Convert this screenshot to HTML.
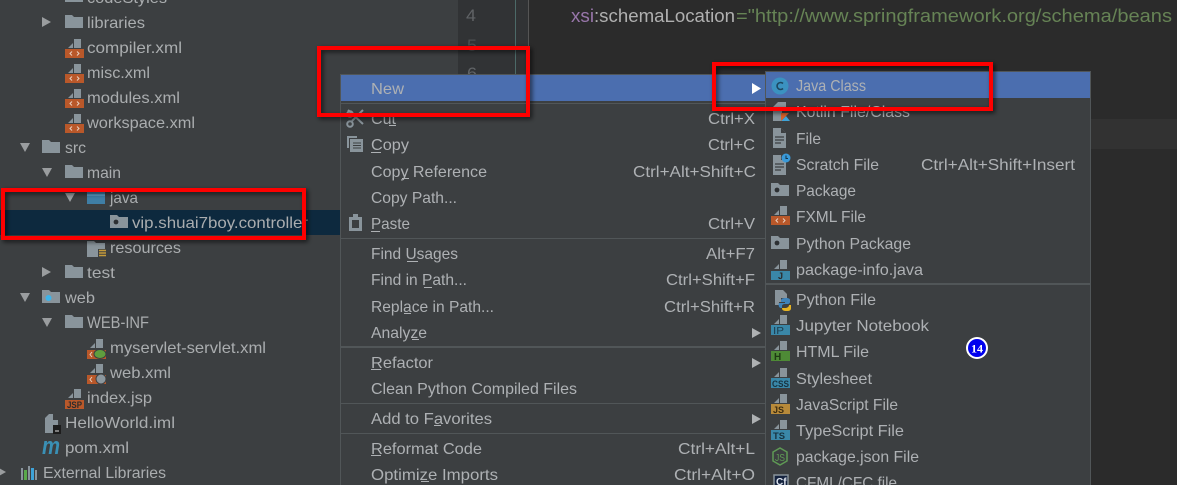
<!DOCTYPE html>
<html><head><meta charset="utf-8"><style>
html,body{margin:0;padding:0;background:#3c3f41;width:1177px;height:485px;overflow:hidden}
svg{display:block}
text{font-family:"Liberation Sans",sans-serif;font-size:16px;fill:#aaadaf}
.m text{fill:#aeb1b4}
</style></head><body>
<svg width="1177" height="485" viewBox="0 0 1177 485" xmlns="http://www.w3.org/2000/svg">
<defs>
<filter id="sh" x="-10%" y="-20%" width="120%" height="140%"><feDropShadow dx="2" dy="2" stdDeviation="2.5" flood-color="#000" flood-opacity=".65"/></filter>
<g id="fo"><path d="M0-8h7l2 2h9V5H0z" fill="#89949b"/></g>
<g id="pk"><path d="M0-8h7l2 2h9V5H0z" fill="#89949b"/><circle cx="6" cy="-1" r="2.4" fill="#2d3033"/></g>
<g id="dc"><path d="M9-8h7V1H9zM3 1l5-5v5z" fill="#89949b"/></g>
<g id="xm"><use href="#dc"/><rect y="2" width="19" height="9" fill="#b9582a"/><path d="M7 4.500 5 6.500l2 2M12 4.500l2 2-2 2" fill="none" stroke="#e8d0c0" stroke-width="1"/></g>
<g id="ar"><path d="M0 0h10L5 9z" fill="#9a9d9f"/></g>
<g id="ac"><path d="M0 0l9 5-9 5z" fill="#9a9d9f"/></g>
<g id="tx"><path d="M1-10h8l5 5V10H1z" fill="#89949b"/><path d="M9-10l5 5H9z" fill="#3c3f41"/><path d="M3-1h9M3 2h9M3 5h6" stroke="#3c3f41" stroke-width="1.200"/></g>
</defs>

<rect width="1177" height="485" fill="#3c3f41"/>
<!-- editor -->
<rect x="458" width="719" height="485" fill="#2b2b2b"/>
<rect x="458" width="70" height="485" fill="#313335"/>
<rect x="515" width="1" height="485" fill="#4c6a68"/>
<rect x="528" width="1" height="485" fill="#555"/>
<rect x="529" y="119" width="648" height="30" fill="#323232"/>
<text x="466" y="21" textLength="10" lengthAdjust="spacingAndGlyphs" style="font-size:17px;fill:#606366">4</text>
<text x="467" y="51" textLength="10" lengthAdjust="spacingAndGlyphs" style="font-size:17px;fill:#4d5052">5</text>
<text x="467" y="79" textLength="10" lengthAdjust="spacingAndGlyphs" style="font-size:17px;fill:#606366">6</text>
<text x="571" y="22" textLength="23" lengthAdjust="spacingAndGlyphs" style="font-size:18px;fill:#9876aa">xsi</text>
<text x="594" y="22" textLength="141" lengthAdjust="spacingAndGlyphs" style="font-size:18px;fill:#b0b0b0">:schemaLocation</text>
<text x="736" y="22" textLength="436" lengthAdjust="spacingAndGlyphs" style="font-size:18px;fill:#668355">="http://www.springframework.org/schema/beans</text>

<!-- tree -->
<rect y="210" width="341" height="25" fill="#0d293e"/>
<use href="#ac" x="42" y="17"/><use href="#ac" x="42" y="267"/><use href="#ac" x="-3" y="467"/>
<use href="#ar" x="20" y="143"/><use href="#ar" x="42" y="168"/><use href="#ar" x="65" y="193"/><use href="#ar" x="20" y="293"/><use href="#ar" x="42" y="318"/>
<use href="#fo" x="65" y="-3"/><use href="#fo" x="65" y="23"/>
<use href="#xm" x="65" y="47"/><use href="#xm" x="65" y="72"/><use href="#xm" x="65" y="97"/><use href="#xm" x="65" y="122"/>
<use href="#fo" x="42" y="148"/><use href="#fo" x="65" y="173"/>
<path d="M87 190h7l2 2h9v12H87z" fill="#3f7ea5"/><path d="M87 194h18v2H87z" fill="#5b9cc4"/>
<use href="#pk" x="110" y="223"/>
<path d="M87 241h7l2 2h9v14H87z" fill="#89949b"/><rect x="98" y="249" width="8" height="9" fill="#3c3f41"/><path d="M99 250.500h7M99 253h7M99 255.500h7" stroke="#c39a3a" stroke-width="1.400"/>
<use href="#fo" x="65" y="273"/>
<use href="#fo" x="42" y="298"/><circle cx="48.500" cy="298" r="3" fill="#3db4ea"/>
<use href="#fo" x="65" y="323"/>
<use href="#dc" x="87" y="347"/><rect x="87" y="350" width="19" height="9" fill="#b9582a"/><path d="M92 352l-2 2.500 2 2.500" fill="none" stroke="#e8d0c0"/><ellipse cx="100" cy="354" rx="6" ry="4.500" fill="#5f9e3e" stroke="#3c3f41"/>
<use href="#dc" x="87" y="372"/><rect x="87" y="375" width="19" height="9" fill="#b9582a"/><path d="M92 377l-2 2.500 2 2.500" fill="none" stroke="#e8d0c0"/><circle cx="101" cy="379" r="5" fill="#8c979e" stroke="#3c3f41"/>
<use href="#dc" x="65" y="397"/><rect x="65" y="400" width="19" height="9" fill="#b9582a"/><text x="67" y="408" textLength="15" lengthAdjust="spacingAndGlyphs" style="font-size:9px;font-weight:bold;fill:#2b2b2b">JSP</text>
<path d="M49 414h4v6h5v13H45V418z" fill="#89949b"/><rect x="53" y="425" width="8" height="9" fill="#1d1d1d"/><path d="M55 431h4" stroke="#ddd"/>
<text x="42" y="454" textLength="18" lengthAdjust="spacingAndGlyphs" style="font-size:24px;font-weight:bold;font-style:italic;fill:#3a90b5">m</text>
<path d="M21 468h2v12h-2z" fill="#89949b"/><path d="M24 470h3v10h-3z" fill="#59a84b"/><path d="M28 466h2v14h-2z" fill="#89949b"/><path d="M31 468h3v12h-3z" fill="#3ea3d8"/><path d="M35 470h2v10h-2z" fill="#89949b"/>

<text x="87" y="3" textLength="80" lengthAdjust="spacingAndGlyphs">codeStyles</text>
<text x="87" y="28" textLength="58" lengthAdjust="spacingAndGlyphs">libraries</text>
<text x="87" y="53" textLength="95" lengthAdjust="spacingAndGlyphs">compiler.xml</text>
<text x="87" y="78" textLength="63" lengthAdjust="spacingAndGlyphs">misc.xml</text>
<text x="87" y="103" textLength="93" lengthAdjust="spacingAndGlyphs">modules.xml</text>
<text x="87" y="128" textLength="108" lengthAdjust="spacingAndGlyphs">workspace.xml</text>
<text x="65" y="153" textLength="21" lengthAdjust="spacingAndGlyphs">src</text>
<text x="87" y="178" textLength="34" lengthAdjust="spacingAndGlyphs">main</text>
<text x="110" y="203" textLength="28" lengthAdjust="spacingAndGlyphs">java</text>
<text x="132" y="228" textLength="176" lengthAdjust="spacingAndGlyphs">vip.shuai7boy.controller</text>
<text x="110" y="253" textLength="71" lengthAdjust="spacingAndGlyphs">resources</text>
<text x="87" y="278" textLength="28" lengthAdjust="spacingAndGlyphs">test</text>
<text x="65" y="303" textLength="30" lengthAdjust="spacingAndGlyphs">web</text>
<text x="87" y="328" textLength="62" lengthAdjust="spacingAndGlyphs" style="font-size:17px">WEB-INF</text>
<text x="110" y="353" textLength="156" lengthAdjust="spacingAndGlyphs">myservlet-servlet.xml</text>
<text x="110" y="378" textLength="61" lengthAdjust="spacingAndGlyphs">web.xml</text>
<text x="87" y="403" textLength="65" lengthAdjust="spacingAndGlyphs">index.jsp</text>
<text x="65" y="428" textLength="110" lengthAdjust="spacingAndGlyphs">HelloWorld.iml</text>
<text x="65" y="453" textLength="64" lengthAdjust="spacingAndGlyphs">pom.xml</text>
<text x="43" y="478" textLength="123" lengthAdjust="spacingAndGlyphs">External Libraries</text>

<!-- context menu -->
<g class="m">
<rect x="340.500" y="74.500" width="426" height="420" fill="#3c3f41" stroke="#515658"/>
<rect x="341" y="75" width="425" height="26" fill="#4b6eaf"/>
<g fill="#515658"><rect x="341" y="103" width="425" height="1"/><rect x="341" y="238" width="425" height="1"/><rect x="341" y="346" width="425" height="2"/><rect x="341" y="403" width="425" height="1"/><rect x="341" y="433" width="425" height="1"/></g>
<path d="M752 83l9 5.500-9 5.500z" fill="#fff"/>
<path d="M752 328l9 5-9 5zM752 358l9 5-9 5zM752 414l9 5-9 5z" fill="#aeb1b3"/>
<!-- icons -->
<g fill="none" stroke="#89949b" stroke-width="2"><path d="M363 110 352 121M348 110l15 14"/><circle cx="350" cy="124" r="2.800"/><circle cx="350" cy="114" r="2.800"/></g>
<path d="M347 136h10v2h-8v10h-2z" fill="#89949b"/><path d="M350 139h13v13h-13z" fill="#89949b"/><path d="M353 143h8M353 145.500h8M353 148h8" stroke="#3c3f41"/>
<path d="M349 217h4v-3h5v3h4v14h-13z" fill="#89949b"/><rect x="352" y="220" width="7" height="8" fill="#3c3f41"/>

<text x="371" y="94" textLength="33" lengthAdjust="spacingAndGlyphs">New</text>
<text x="371" y="124" textLength="25" lengthAdjust="spacingAndGlyphs">Cut</text>
<text x="371" y="150" textLength="38" lengthAdjust="spacingAndGlyphs">Copy</text>
<text x="371" y="177" textLength="116" lengthAdjust="spacingAndGlyphs">Copy Reference</text>
<text x="371" y="203" textLength="86" lengthAdjust="spacingAndGlyphs">Copy Path...</text>
<text x="371" y="229" textLength="39" lengthAdjust="spacingAndGlyphs">Paste</text>
<text x="371" y="259" textLength="87" lengthAdjust="spacingAndGlyphs">Find Usages</text>
<text x="371" y="285" textLength="96" lengthAdjust="spacingAndGlyphs">Find in Path...</text>
<text x="371" y="312" textLength="123" lengthAdjust="spacingAndGlyphs">Replace in Path...</text>
<text x="371" y="338" textLength="56" lengthAdjust="spacingAndGlyphs">Analyze</text>
<text x="371" y="368" textLength="62" lengthAdjust="spacingAndGlyphs">Refactor</text>
<text x="371" y="394" textLength="206" lengthAdjust="spacingAndGlyphs">Clean Python Compiled Files</text>
<text x="371" y="424" textLength="121" lengthAdjust="spacingAndGlyphs">Add to Favorites</text>
<text x="371" y="454" textLength="111" lengthAdjust="spacingAndGlyphs">Reformat Code</text>
<text x="371" y="480" textLength="127" lengthAdjust="spacingAndGlyphs">Optimize Imports</text>

<text x="708" y="124" textLength="47" lengthAdjust="spacingAndGlyphs">Ctrl+X</text>
<text x="708" y="150" textLength="47" lengthAdjust="spacingAndGlyphs">Ctrl+C</text>
<text x="633" y="177" textLength="123" lengthAdjust="spacingAndGlyphs">Ctrl+Alt+Shift+C</text>
<text x="708" y="229" textLength="47" lengthAdjust="spacingAndGlyphs">Ctrl+V</text>
<text x="706" y="259" textLength="49" lengthAdjust="spacingAndGlyphs">Alt+F7</text>
<text x="666" y="285" textLength="89" lengthAdjust="spacingAndGlyphs">Ctrl+Shift+F</text>
<text x="664" y="312" textLength="91" lengthAdjust="spacingAndGlyphs">Ctrl+Shift+R</text>
<text x="678" y="454" textLength="77" lengthAdjust="spacingAndGlyphs">Ctrl+Alt+L</text>
<text x="674" y="480" textLength="81" lengthAdjust="spacingAndGlyphs">Ctrl+Alt+O</text>

<g fill="#aeb1b4"><rect x="389" y="125" width="7" height="1"/><rect x="371" y="152" width="10" height="1"/><rect x="402" y="178" width="7" height="1"/><rect x="371" y="231" width="9" height="1"/><rect x="407" y="261" width="11" height="1"/><rect x="424" y="287" width="8" height="1"/><rect x="404" y="313" width="7" height="1"/><rect x="412" y="339" width="7" height="1"/><rect x="371" y="369" width="10" height="1"/><rect x="434" y="425" width="7" height="1"/><rect x="371" y="455" width="10" height="1"/><rect x="421" y="481" width="8" height="1"/></g>

<!-- submenu -->
<rect x="765.500" y="71.500" width="325" height="420" fill="#3c3f41" stroke="#515658"/>
<rect x="766" y="72" width="324" height="26" fill="#4b6eaf"/>
<rect x="766" y="283" width="324" height="2" fill="#515658"/>

<circle cx="780" cy="86" r="8.500" fill="#3b92c0"/><path d="M783 83.500a3.500 3.500 0 1 0 0 5" fill="none" stroke="#1d4760" stroke-width="1.600"/>
<path d="M778 102h8v9h-4v10h-9v-14z" fill="#89949b"/><path d="M781 121l9-9-4 4 4 5z" fill="#3ea3d8"/><path d="M781 121v-8l8 0z" fill="#d9622b"/>
<use href="#tx" x="772" y="138"/>
<use href="#tx" x="772" y="165"/><circle cx="786" cy="158" r="4.500" fill="#3a9ad9"/><path d="M786 155.500v3h2" stroke="#12334a" fill="none"/>
<use href="#pk" x="771" y="191"/>
<use href="#xm" x="771" y="214"/>
<use href="#pk" x="771" y="244"/>
<use href="#dc" x="771" y="268"/><rect x="771" y="271" width="19" height="9" fill="#3a87a8"/><text x="778" y="279" style="font-size:9px;font-weight:bold;fill:#2b2b2b">J</text>

<path d="M775 290h8l4 4v4h-6v4h-2v3h-4z" fill="#89949b"/><path d="M786 298c-4 0-5 1-5 3v1h4v1h-6c-1 2 0 5 2 5h1v-2c0-1 1-2 3-2h3c1 0 2-1 2-2v-2c0-1-1-2-4-2z" fill="#3f84bb"/><path d="M787 311c3 0 4-1 4-3v-3h-2c0 2-2 3-4 3h-3c0 2 1 3 5 3z" fill="#e6b422"/>
<use href="#dc" x="771" y="323"/><rect x="771" y="325" width="19" height="10" fill="#3a87a8"/><text x="773" y="334" textLength="11" lengthAdjust="spacingAndGlyphs" style="font-size:10px;fill:#1e3d4e">IP</text>
<use href="#dc" x="771" y="349"/><rect x="771" y="351" width="19" height="10" fill="#4e8a36"/><text x="774" y="360" style="font-size:10px;font-weight:bold;fill:#1f3a14">H</text>
<use href="#dc" x="771" y="376"/><rect x="771" y="378" width="19" height="10" fill="#3a87a8"/><text x="772" y="387" textLength="17" lengthAdjust="spacingAndGlyphs" style="font-size:9px;font-weight:bold;fill:#17323f">CSS</text>
<use href="#dc" x="771" y="402"/><rect x="771" y="404" width="19" height="10" fill="#b88a3a"/><text x="773" y="413" textLength="11" lengthAdjust="spacingAndGlyphs" style="font-size:9px;font-weight:bold;fill:#3a2b10">JS</text>
<use href="#dc" x="771" y="428"/><rect x="771" y="430" width="19" height="10" fill="#3a87a8"/><text x="773" y="439" textLength="12" lengthAdjust="spacingAndGlyphs" style="font-size:9px;font-weight:bold;fill:#17323f">TS</text>
<path d="M780 448l7 4v9l-7 4-7-4v-9z" fill="none" stroke="#5f9a55" stroke-width="1.500"/><text x="775" y="461" textLength="10" lengthAdjust="spacingAndGlyphs" style="font-size:10px;fill:#5f9a55">JS</text>
<rect x="774" y="475" width="14" height="14" fill="#15233f" stroke="#89949b" stroke-width="1.500"/><text x="776" y="485" style="font-size:10px;font-weight:bold;fill:#dfe6f0">Cf</text>

<text x="796" y="91" textLength="70" lengthAdjust="spacingAndGlyphs">Java Class</text>
<text x="796" y="117" textLength="114" lengthAdjust="spacingAndGlyphs">Kotlin File/Class</text>
<text x="796" y="144" textLength="25" lengthAdjust="spacingAndGlyphs">File</text>
<text x="796" y="170" textLength="83" lengthAdjust="spacingAndGlyphs">Scratch File</text>
<text x="796" y="196" textLength="60" lengthAdjust="spacingAndGlyphs">Package</text>
<text x="796" y="222" textLength="70" lengthAdjust="spacingAndGlyphs">FXML File</text>
<text x="796" y="249" textLength="115" lengthAdjust="spacingAndGlyphs">Python Package</text>
<text x="796" y="275" textLength="127" lengthAdjust="spacingAndGlyphs">package-info.java</text>
<text x="796" y="305" textLength="80" lengthAdjust="spacingAndGlyphs">Python File</text>
<text x="796" y="331" textLength="133" lengthAdjust="spacingAndGlyphs">Jupyter Notebook</text>
<text x="796" y="357" textLength="73" lengthAdjust="spacingAndGlyphs">HTML File</text>
<text x="796" y="384" textLength="76" lengthAdjust="spacingAndGlyphs">Stylesheet</text>
<text x="796" y="410" textLength="102" lengthAdjust="spacingAndGlyphs">JavaScript File</text>
<text x="796" y="436" textLength="108" lengthAdjust="spacingAndGlyphs">TypeScript File</text>
<text x="796" y="462" textLength="123" lengthAdjust="spacingAndGlyphs">package.json File</text>
<text x="796" y="488" textLength="101" lengthAdjust="spacingAndGlyphs">CFML/CFC file</text>
<text x="921" y="170" textLength="154" lengthAdjust="spacingAndGlyphs">Ctrl+Alt+Shift+Insert</text>
</g>

<!-- badge -->
<circle cx="977" cy="348" r="11" fill="#fff"/><circle cx="977" cy="348" r="9" fill="#0000ee"/>
<text x="977" y="352.500" text-anchor="middle" style="font-family:'Liberation Serif',serif;font-size:12px;font-weight:bold;fill:#fff">14</text>

<!-- red annotations -->
<g fill="none" stroke="#fe0000" stroke-width="4" filter="url(#sh)">
<rect x="319" y="48" width="209" height="67"/>
<rect x="714" y="64" width="277" height="45"/>
<rect x="3" y="190" width="301" height="48"/>
</g>
</svg>
</body></html>
